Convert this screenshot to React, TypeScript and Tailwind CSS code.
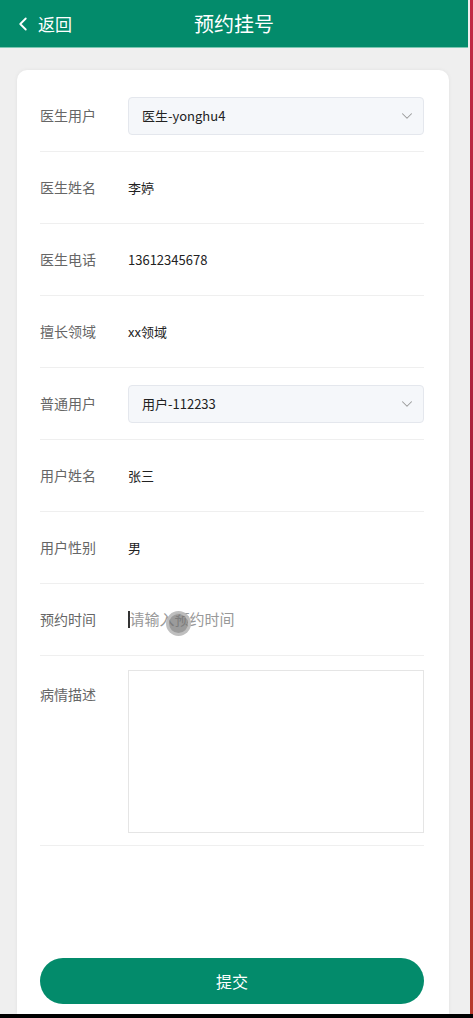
import { ChevronLeft, ChevronDown } from "lucide-react";

const font = {
  fontFamily: '"Noto Sans CJK SC", "Liberation Sans", sans-serif',
};

function SelectBox({ value }: { value: string }) {
  return (
    <div className="flex h-[38px] flex-1 items-center justify-between rounded-[4px] border border-[#e4e7ed] bg-[#f5f7fa] pl-[13px] pr-[7px]">
      <span className="text-[13px] text-[#222]">{value}</span>
      <ChevronDown size={18} strokeWidth={1.4} className="text-[#999]" />
    </div>
  );
}

function Row({ label, children }: { label: string; children: React.ReactNode }) {
  return (
    <div className="flex h-[72px] items-center border-b border-[#efefef]">
      <div className="w-[88px] shrink-0 text-[14px] text-[#666]">{label}</div>
      {children}
    </div>
  );
}

function Text({ children }: { children: React.ReactNode }) {
  return <span className="text-[13px] text-[#222]">{children}</span>;
}

export default function App() {
  return (
    <div className="flex h-[1018px] w-[473px] flex-col overflow-hidden bg-black" style={font}>
      <div className="flex h-[1014px] w-full">
        <div className="flex w-[470px] flex-col bg-[#efefef]">
          <header className="relative mr-[2px] flex h-[48px] shrink-0 items-center border-b border-[#7cc7b2] bg-[#038b6b] text-white">
            <div className="flex items-center pl-[12px]">
              <ChevronLeft size={22} strokeWidth={2} />
              <span className="ml-[4px] text-[17px]">返回</span>
            </div>
            <div className="pointer-events-none absolute left-0 right-0 text-center text-[20px]">预约挂号</div>
          </header>

          <div className="ml-[17px] mr-[21px] mt-[22px] flex-1 rounded-t-[10px] bg-white pl-[23px] pr-[25px] pt-[10px] shadow-[0_0_4px_rgba(0,0,0,0.06)]">
            <Row label="医生用户">
              <SelectBox value="医生-yonghu4" />
            </Row>
            <Row label="医生姓名">
              <Text>李婷</Text>
            </Row>
            <Row label="医生电话">
              <Text>13612345678</Text>
            </Row>
            <Row label="擅长领域">
              <Text>xx领域</Text>
            </Row>
            <Row label="普通用户">
              <SelectBox value="用户-112233" />
            </Row>
            <Row label="用户姓名">
              <Text>张三</Text>
            </Row>
            <Row label="用户性别">
              <Text>男</Text>
            </Row>
            <Row label="预约时间">
              <div className="relative flex items-center">
                <span className="h-[17px] w-[1.5px] bg-[#333]" />
                <span className="text-[15px] text-[#999]">请输入预约时间</span>
                <span className="absolute left-[38px] top-[3px] h-[25px] w-[25px] rounded-full border-[3px] border-[#c8c8c8]/80 bg-[#707070]/70" />
              </div>
            </Row>
            <div className="flex h-[190px] items-start border-b border-[#efefef] pt-[14px]">
              <div className="w-[88px] shrink-0 pt-[14px] text-[14px] text-[#666]">病情描述</div>
              <div className="h-[163px] flex-1 border border-[#e5e5e5]" />
            </div>

            <button className="mt-[112px] flex h-[46px] w-full items-center justify-center rounded-full bg-[#038b6b] text-[16px] text-white">
              提交
            </button>
          </div>
        </div>
        <div className="w-[3px] bg-gradient-to-b from-[#c22a44] via-[#a8203a] to-[#b83a2c]" />
      </div>
    </div>
  );
}
